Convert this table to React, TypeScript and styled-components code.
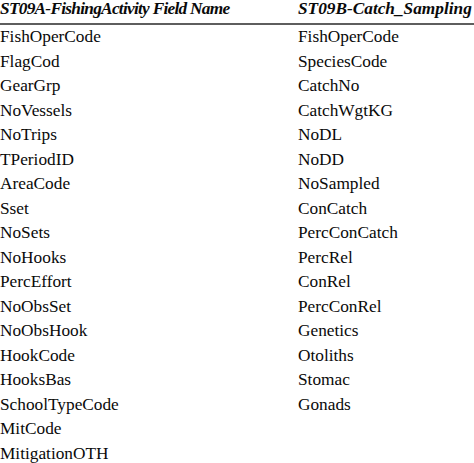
import styled, { createGlobalStyle } from "styled-components";

const GlobalStyle = createGlobalStyle`
  html, body {
    margin: 0;
    padding: 0;
    background: #ffffff;
    overflow: hidden;
  }
`;

const Table = styled.div`
  width: 474px;
  font-family: "Liberation Serif", "Times New Roman", serif;
  font-size: 17.3px;
  color: #0a0a0a;
`;

const HeaderRow = styled.div`
  display: grid;
  grid-template-columns: 298px 1fr;
  line-height: 18px;
  padding-bottom: 5px;
  border-bottom: 2px solid #5e5e5e;
  white-space: nowrap;
  overflow: hidden;
`;

const HeadCell = styled.div<{ $tight?: boolean }>`
  font-weight: bold;
  font-style: italic;
  letter-spacing: ${(p) => (p.$tight ? "-0.72px" : "0")};
`;

const Row = styled.div`
  display: grid;
  grid-template-columns: 298px 1fr;
  line-height: 24.5px;
  white-space: nowrap;
`;

const Cell = styled.div``;

const activity = [
  "FishOperCode", "FlagCod", "GearGrp", "NoVessels", "NoTrips", "TPeriodID",
  "AreaCode", "Sset", "NoSets", "NoHooks", "PercEffort", "NoObsSet",
  "NoObsHook", "HookCode", "HooksBas", "SchoolTypeCode", "MitCode", "MitigationOTH",
];

const sampling = [
  "FishOperCode", "SpeciesCode", "CatchNo", "CatchWgtKG", "NoDL", "NoDD",
  "NoSampled", "ConCatch", "PercConCatch", "PercRel", "ConRel", "PercConRel",
  "Genetics", "Otoliths", "Stomac", "Gonads",
];

export default function App() {
  return (
    <>
      <GlobalStyle />
      <Table>
        <HeaderRow>
          <HeadCell $tight>ST09A-FishingActivity Field Name</HeadCell>
          <HeadCell>ST09B-Catch_Sampling</HeadCell>
        </HeaderRow>
        {activity.map((name, i) => (
          <Row key={name + i}>
            <Cell>{name}</Cell>
            <Cell>{sampling[i] ?? ""}</Cell>
          </Row>
        ))}
      </Table>
    </>
  );
}
